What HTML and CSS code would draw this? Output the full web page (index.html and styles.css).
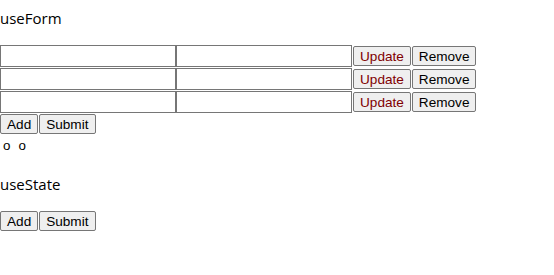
FILE: index.html
```html
<!DOCTYPE html>
<html>
<head>
<meta charset="utf-8">
<link rel="stylesheet" href="styles.css">
</head>
<body>
<section class="block">
  <div class="title">useForm</div>
  <div class="rows">
    <div class="row"><input class="field" type="text"><input class="field" type="text"><button class="btn update">Update</button><button class="btn">Remove</button></div>
    <div class="row"><input class="field" type="text"><input class="field" type="text"><button class="btn update">Update</button><button class="btn">Remove</button></div>
    <div class="row"><input class="field" type="text"><input class="field" type="text"><button class="btn update">Update</button><button class="btn">Remove</button></div>
  </div>
  <div class="actions"><button class="btn">Add</button><button class="btn">Submit</button></div>
  <div class="marks"><span>o</span><span>o</span></div>
</section>
<section class="block">
  <div class="title title2">useState</div>
  <div class="actions"><button class="btn">Add</button><button class="btn">Submit</button></div>
</section>
</body>
</html>
```
FILE: styles.css
```css
html, body {
  margin: 0;
  padding: 0;
  background: #fff;
}
body {
  font-family: "Liberation Sans", Arial, sans-serif;
}
.title {
  font-family: "Open Sans", "Noto Sans", sans-serif;
  font-size: 15px;
  color: #000;
  height: 20px;
  line-height: 20px;
  padding-top: 8px;
  margin-bottom: 17px;
}
.title2 {
  padding-top: 19px;
}
.rows {
  display: flex;
  flex-direction: column;
  gap: 1px;
}
.row {
  display: flex;
  align-items: center;
  height: 22px;
}
.field {
  box-sizing: border-box;
  width: 176px;
  height: 22px;
  margin: 0;
  border: 1px solid #767676;
  padding: 1px 2px;
  font-family: "Liberation Sans", Arial, sans-serif;
  font-size: 13.33px;
}
.btn {
  box-sizing: border-box;
  height: 20px;
  margin: 0 1px 0 0;
  padding: 0 6px;
  border: 1px solid #767676;
  border-radius: 2px;
  background: #efefef;
  font-family: "Liberation Sans", Arial, sans-serif;
  font-size: 13.6px;
  color: #000;
}
.row .btn:first-of-type {
  margin-left: 1px;
}
.update {
  color: #800000;
}
.actions {
  display: flex;
  margin-top: 1px;
}
.marks {
  display: flex;
  gap: 8px;
  padding-left: 3px;
  padding-top: 2px;
  font-size: 13.33px;
  height: 19px;
  line-height: 20px;
}
```
